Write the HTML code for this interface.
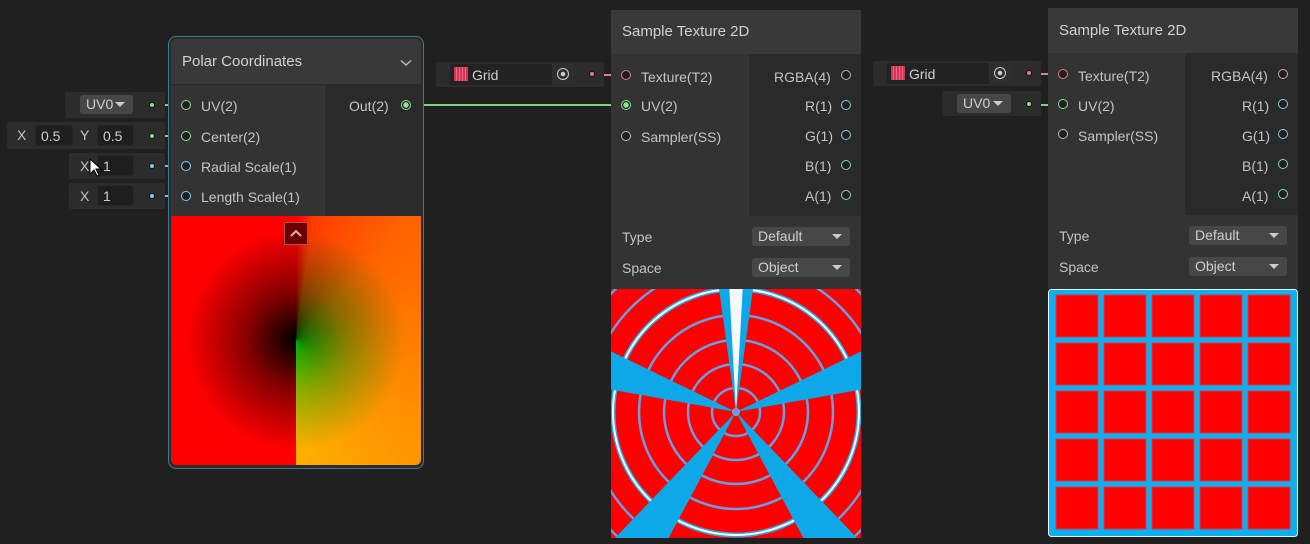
<!DOCTYPE html>
<html><head><meta charset="utf-8"><style>
*{box-sizing:border-box;margin:0;padding:0}
html,body{width:1310px;height:544px;overflow:hidden}
body{background:#202020;position:relative;font-family:"Liberation Sans",sans-serif;font-size:14px;color:#c4c4c4}
.a{position:absolute}
.t{position:absolute;line-height:16px;white-space:nowrap}
.p{position:absolute;width:10px;height:10px;border-radius:50%;border:1.5px solid #aaa;background:#1f1f1f}
.dot{position:absolute;width:6px;height:6px;border-radius:50%}
.strip{position:absolute;background:#2c2c2c;border-radius:2px}
.fld{position:absolute;background:#1e1e1e;border:1px solid #262626;border-radius:3px;color:#cfcfcf;line-height:20px;padding-left:5px}
.dd{position:absolute;background:#474747;border-radius:3px;color:#d0d0d0;line-height:19px;padding-left:6px}
.dd:after{content:"";position:absolute;right:8px;top:7px;border-left:5px solid transparent;border-right:5px solid transparent;border-top:5px solid #ccc}
</style></head><body>

<div class="a" style="left:406px;top:104px;width:218px;height:2px;background:#7fd27f"></div>
<div class="a" style="left:152px;top:104px;width:34px;height:2px;background:#7fd27f"></div>
<div class="a" style="left:152px;top:135px;width:34px;height:2px;background:#7fd27f"></div>
<div class="a" style="left:152px;top:165px;width:34px;height:2px;background:#6fc7e6"></div>
<div class="a" style="left:152px;top:195px;width:34px;height:2px;background:#6fc7e6"></div>
<div class="a" style="left:592px;top:74px;width:32px;height:2px;background:#e37c84"></div>
<div class="a" style="left:1029px;top:73px;width:32px;height:2px;background:#e37c84"></div>
<div class="a" style="left:1029px;top:104px;width:32px;height:2px;background:#7fd27f"></div>

<div class="strip" style="left:65px;top:92px;width:100px;height:26px"></div>
<div class="dd" style="left:80px;top:95px;width:53px;height:19px">UV0</div>
<div class="dot" style="left:149px;top:102px;background:#8fe08f;border:1px solid #111"></div>
<div class="strip" style="left:7px;top:122px;width:158px;height:27px"></div>
<div class="t" style="left:17px;top:127px">X</div>
<div class="fld" style="left:35px;top:125px;width:38px;height:21px">0.5</div>
<div class="t" style="left:80px;top:127px">Y</div>
<div class="fld" style="left:97px;top:125px;width:37px;height:21px">0.5</div>
<div class="dot" style="left:149px;top:133px;background:#8fe08f;border:1px solid #111"></div>
<div class="strip" style="left:69px;top:153px;width:96px;height:26px"></div>
<div class="t" style="left:80px;top:158px">X</div>
<div class="fld" style="left:97px;top:155px;width:37px;height:21px">1</div>
<svg class="a" style="left:89px;top:158px" width="14" height="20"><path d="M1 1 L1 16 L5 12 L8 18 L10 17 L7 11 L12 11 Z" fill="#fff" stroke="#000" stroke-width="1"/></svg>
<div class="dot" style="left:149px;top:163px;background:#84d2ea;border:1px solid #111"></div>
<div class="strip" style="left:69px;top:183px;width:96px;height:26px"></div>
<div class="t" style="left:80px;top:188px">X</div>
<div class="fld" style="left:97px;top:185px;width:37px;height:21px">1</div>
<div class="dot" style="left:149px;top:193px;background:#84d2ea;border:1px solid #111"></div>

<div class="a" style="left:168px;top:36px;width:256px;height:433px;border:1.5px solid #3d7a93;border-radius:8px;background:#2b2b2b"></div>
<div class="a" style="left:171px;top:39px;width:250px;height:45px;background:#393939;border-radius:5px 5px 0 0"></div>
<div class="t" style="left:182px;top:54px;font-size:15px;color:#d2d2d2">Polar Coordinates</div>
<svg class="a" style="left:400px;top:59px" width="12" height="8"><path d="M1 1.5 L6 6 L11 1.5" fill="none" stroke="#bbb" stroke-width="1.5"/></svg>
<div class="a" style="left:171px;top:85px;width:154px;height:131px;background:#333"></div>
<div class="a" style="left:326px;top:85px;width:95px;height:131px;background:#2a2a2a"></div>
<div class="p" style="left:181px;top:100px;border-color:#8fe08f"></div><div class="t" style="left:201px;top:98px">UV(2)</div>
<div class="p" style="left:181px;top:131px;border-color:#8fe08f"></div><div class="t" style="left:201px;top:129px">Center(2)</div>
<div class="p" style="left:181px;top:161px;border-color:#84d2ea"></div><div class="t" style="left:201px;top:159px">Radial Scale(1)</div>
<div class="p" style="left:181px;top:191px;border-color:#84d2ea"></div><div class="t" style="left:201px;top:189px">Length Scale(1)</div>
<div class="t" style="left:349px;top:98px">Out(2)</div>
<div class="p" style="left:401px;top:100px;border-color:#8fe08f;background:radial-gradient(circle,#8fe08f 2.5px,#1f1f1f 3px)"></div>
<div class="a" style="left:171px;top:216px;width:250px;height:249px;overflow:hidden;border-radius:0 0 5px 5px;background:#000">
 <div class="a" style="left:0;top:0;width:250px;height:249px;background:radial-gradient(circle 110px at 125px 124px,#000 0%,#800 45%,#f00 100%)"></div>
 <div class="a" style="left:0;top:0;width:250px;height:249px;mix-blend-mode:screen;background:conic-gradient(from 0deg at 125px 124px,#000 0deg,#003c00 8deg,#006400 45deg,#007d00 90deg,#009600 135deg,#00b000 180deg,#000 180deg,#000 360deg)"></div>
</div>
<div class="a" style="left:284px;top:222px;width:24px;height:23px;background:#6b0000;border:1px solid #b05050"></div>
<svg class="a" style="left:290px;top:229px" width="12" height="8"><path d="M1 7 L6 2 L11 7" fill="none" stroke="#e0b0b0" stroke-width="2"/></svg>

<div class="strip" style="left:436px;top:62px;width:168px;height:25px"></div>
<div class="a" style="left:450px;top:64px;width:124px;height:21px;background:#222;border-radius:3px"></div>
<div class="a" style="left:454px;top:67px;width:14px;height:14px;background:repeating-linear-gradient(90deg,#e8385a 0 2px,#ff7090 2px 3px),#e8385a;opacity:.9"></div>
<div class="t" style="left:472px;top:67px;color:#d0d0d0">Grid</div>
<div class="a" style="left:552px;top:64px;width:22px;height:21px;background:#2e2e2e"></div>
<div class="a" style="left:557px;top:68px;width:12px;height:12px;border:1.5px solid #ccc;border-radius:50%;background:radial-gradient(circle,#ccc 2px,transparent 2.5px)"></div>
<div class="dot" style="left:589px;top:71px;background:#e37c84;border:1px solid #111"></div>

<div class="a" style="left:611px;top:10px;width:250px;height:44px;background:#393939"></div>
<div class="t" style="left:622px;top:24px;font-size:15px;color:#d2d2d2">Sample Texture 2D</div>
<div class="a" style="left:611px;top:54px;width:138px;height:162px;background:#333"></div>
<div class="a" style="left:749px;top:54px;width:112px;height:162px;background:#2a2a2a"></div>
<div class="p" style="left:621px;top:70px;border-color:#e37c84"></div><div class="t" style="left:641px;top:69px">Texture(T2)</div>
<div class="p" style="left:621px;top:100px;border-color:#8fe08f;background:radial-gradient(circle,#8fe08f 2.5px,#1f1f1f 3px)"></div><div class="t" style="left:641px;top:98px">UV(2)</div>
<div class="p" style="left:621px;top:131px;border-color:#bbb"></div><div class="t" style="left:641px;top:129px">Sampler(SS)</div>
<div class="t" style="left:774px;top:69px">RGBA(4)</div><div class="p" style="left:841px;top:70px;border-color:#c9a9b9"></div>
<div class="t" style="left:805px;top:98px">R(1)</div><div class="p" style="left:841px;top:100px;border-color:#84d2da"></div>
<div class="t" style="left:805px;top:128px">G(1)</div><div class="p" style="left:841px;top:130px;border-color:#84d2da"></div>
<div class="t" style="left:805px;top:158px">B(1)</div><div class="p" style="left:841px;top:160px;border-color:#84d2da"></div>
<div class="t" style="left:805px;top:188px">A(1)</div><div class="p" style="left:841px;top:190px;border-color:#84d2da"></div>
<div class="a" style="left:611px;top:216px;width:250px;height:73px;background:#333"></div>
<div class="t" style="left:622px;top:229px">Type</div>
<div class="dd" style="left:752px;top:227px;width:98px;height:19px">Default</div>
<div class="t" style="left:622px;top:260px">Space</div>
<div class="dd" style="left:752px;top:258px;width:98px;height:19px">Object</div>
<svg class="a" style="left:611px;top:289px" width="250" height="249">
 <rect width="250" height="249" fill="#ff0000"/>
 <g fill="none" stroke="#6a9ee0" stroke-width="2.5">
  <circle cx="125" cy="123" r="24"/><circle cx="125" cy="123" r="48"/><circle cx="125" cy="123" r="72"/><circle cx="125" cy="123" r="97"/>
  <circle cx="125" cy="123" r="148"/><circle cx="125" cy="123" r="172"/>
 </g>
 <circle cx="125" cy="123" r="123" fill="none" stroke="#2aa9e8" stroke-width="5"/>
 <circle cx="125" cy="123" r="123" fill="none" stroke="#ffffff" stroke-width="2"/>
 <g fill="#0da8e8">
  <path d="M125 123 L97 -80 L153 -80 Z"/>
  <path d="M125 123 L97 -80 L153 -80 Z" transform="rotate(72 125 123)"/>
  <path d="M125 123 L97 -80 L153 -80 Z" transform="rotate(144 125 123)"/>
  <path d="M125 123 L97 -80 L153 -80 Z" transform="rotate(216 125 123)"/>
  <path d="M125 123 L97 -80 L153 -80 Z" transform="rotate(288 125 123)"/>
 </g>
 <path d="M125 123 L114 -80 L136 -80 Z" fill="#f4faff"/>
 <circle cx="125" cy="123" r="4" fill="#6a9ee0"/>
</svg>

<div class="strip" style="left:873px;top:61px;width:168px;height:25px"></div>
<div class="a" style="left:887px;top:63px;width:124px;height:21px;background:#222;border-radius:3px"></div>
<div class="a" style="left:891px;top:66px;width:14px;height:14px;background:repeating-linear-gradient(90deg,#e8385a 0 2px,#ff7090 2px 3px),#e8385a;opacity:.9"></div>
<div class="t" style="left:909px;top:66px;color:#d0d0d0">Grid</div>
<div class="a" style="left:989px;top:63px;width:22px;height:21px;background:#2e2e2e"></div>
<div class="a" style="left:994px;top:67px;width:12px;height:12px;border:1.5px solid #ccc;border-radius:50%;background:radial-gradient(circle,#ccc 2px,transparent 2.5px)"></div>
<div class="dot" style="left:1026px;top:70px;background:#e37c84;border:1px solid #111"></div>
<div class="strip" style="left:942px;top:91px;width:99px;height:25px"></div>
<div class="dd" style="left:957px;top:94px;width:54px;height:19px">UV0</div>
<div class="dot" style="left:1026px;top:101px;background:#8fe08f;border:1px solid #111"></div>

<div class="a" style="left:1048px;top:8px;width:250px;height:45px;background:#393939"></div>
<div class="t" style="left:1059px;top:23px;font-size:15px;color:#d2d2d2">Sample Texture 2D</div>
<div class="a" style="left:1048px;top:53px;width:137px;height:162px;background:#333"></div>
<div class="a" style="left:1185px;top:53px;width:113px;height:162px;background:#2a2a2a"></div>
<div class="p" style="left:1058px;top:69px;border-color:#e37c84"></div><div class="t" style="left:1078px;top:68px">Texture(T2)</div>
<div class="p" style="left:1058px;top:99px;border-color:#8fe08f"></div><div class="t" style="left:1078px;top:98px">UV(2)</div>
<div class="p" style="left:1058px;top:129px;border-color:#bbb"></div><div class="t" style="left:1078px;top:128px">Sampler(SS)</div>
<div class="t" style="left:1211px;top:68px">RGBA(4)</div><div class="p" style="left:1278px;top:69px;border-color:#c9a9b9"></div>
<div class="t" style="left:1242px;top:98px">R(1)</div><div class="p" style="left:1278px;top:99px;border-color:#84d2da"></div>
<div class="t" style="left:1242px;top:128px">G(1)</div><div class="p" style="left:1278px;top:129px;border-color:#84d2da"></div>
<div class="t" style="left:1242px;top:158px">B(1)</div><div class="p" style="left:1278px;top:159px;border-color:#84d2da"></div>
<div class="t" style="left:1242px;top:188px">A(1)</div><div class="p" style="left:1278px;top:189px;border-color:#84d2da"></div>
<div class="a" style="left:1048px;top:215px;width:250px;height:74px;background:#333"></div>
<div class="t" style="left:1059px;top:228px">Type</div>
<div class="dd" style="left:1189px;top:226px;width:98px;height:19px">Default</div>
<div class="t" style="left:1059px;top:259px">Space</div>
<div class="dd" style="left:1189px;top:257px;width:98px;height:19px">Object</div>
<svg class="a" style="left:1048px;top:289px" width="250" height="249">
 <rect x="0.5" y="0.5" width="249" height="247" rx="3" fill="#0db0ef" stroke="#e8f6fc"/>
 <g fill="#ff0000" stroke="#d03a5a" stroke-width="1">
  <rect x="8" y="6" width="42" height="42"/><rect x="56" y="6" width="42" height="42"/><rect x="104" y="6" width="42" height="42"/><rect x="152" y="6" width="42" height="42"/><rect x="200" y="6" width="42" height="42"/>
  <rect x="8" y="54" width="42" height="42"/><rect x="56" y="54" width="42" height="42"/><rect x="104" y="54" width="42" height="42"/><rect x="152" y="54" width="42" height="42"/><rect x="200" y="54" width="42" height="42"/>
  <rect x="8" y="102" width="42" height="42"/><rect x="56" y="102" width="42" height="42"/><rect x="104" y="102" width="42" height="42"/><rect x="152" y="102" width="42" height="42"/><rect x="200" y="102" width="42" height="42"/>
  <rect x="8" y="150" width="42" height="42"/><rect x="56" y="150" width="42" height="42"/><rect x="104" y="150" width="42" height="42"/><rect x="152" y="150" width="42" height="42"/><rect x="200" y="150" width="42" height="42"/>
  <rect x="8" y="198" width="42" height="42"/><rect x="56" y="198" width="42" height="42"/><rect x="104" y="198" width="42" height="42"/><rect x="152" y="198" width="42" height="42"/><rect x="200" y="198" width="42" height="42"/>
 </g>
</svg>
</body></html>
